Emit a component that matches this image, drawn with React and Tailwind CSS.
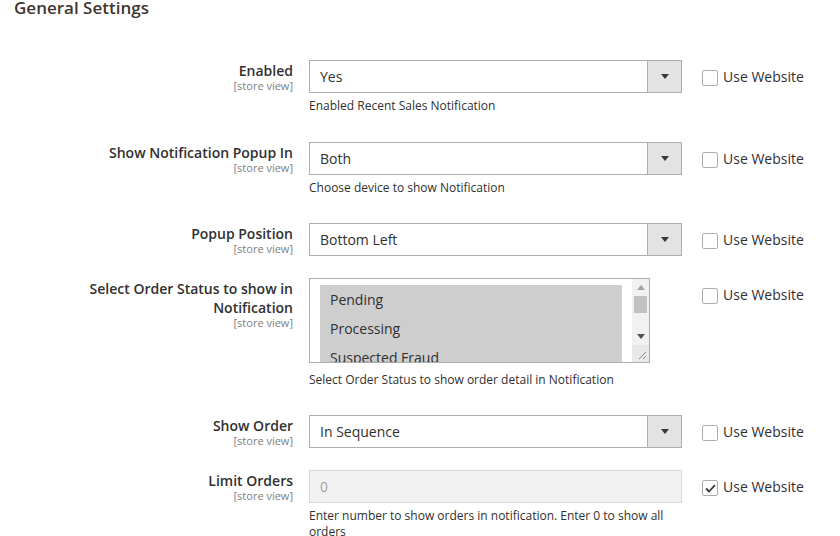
const Arrow = ({ className }) => (
  <svg width="8" height="5" viewBox="0 0 8 5" className={className}>
    <polygon points="0,0 8,0 4,5" fill="currentColor" />
  </svg>
);

const Label = ({ title }) => (
  <div className="ml-[80px] w-[213px] shrink-0 pt-[1px] text-right">
    <div className="text-[14px] font-semibold leading-[19px] text-[#303030]">{title}</div>
    <div className="text-[11px] leading-[12px] text-[#808080]">[store view]</div>
  </div>
);

const UseWebsite = ({ checked }) => (
  <label className="ml-[20px] flex items-start pt-[7px]">
    <span className="mt-[3px] flex h-[16px] w-[16px] items-center justify-center rounded-[2px] border border-[#adadad] bg-white">
      {checked && (
        <svg width="11" height="9" viewBox="0 0 11 9">
          <path d="M1 4.5 L4 7.5 L10 1.2" fill="none" stroke="#41362f" strokeWidth="1.8" />
        </svg>
      )}
    </span>
    <span className="ml-[5px] text-[14px] leading-[19px] text-[#303030]">Use Website</span>
  </label>
);

const Note = ({ children, className = 'mt-[5px]' }) => (
  <p className={`${className} text-[12px] leading-[16px] text-[#303030]`}>{children}</p>
);

const Select = ({ value }) => (
  <div className="flex h-[33px] w-[373px] border border-[#adadad] bg-white">
    <div className="flex flex-1 items-center pl-[10px] text-[14px] leading-[19px] text-[#303030]">{value}</div>
    <div className="flex w-[34px] items-center justify-center border-l border-[#adadad] bg-[#e3e3e3] text-[#41362f]">
      <Arrow />
    </div>
  </div>
);

const Row = ({ title, checked, className, children }) => (
  <div className={`flex items-start ${className}`}>
    <Label title={title} />
    <div className="ml-[16px] w-[373px] shrink-0">{children}</div>
    <UseWebsite checked={checked} />
  </div>
);

const statuses = ['Pending', 'Processing', 'Suspected Fraud', 'Complete'];

const MultiSelect = () => (
  <div className="flex h-[85px] w-[341px] border border-[#adadad] bg-white">
    <div className="flex-1 overflow-hidden px-[10px] pt-[6px]">
      <div className="bg-[#cecece]">
        {statuses.map((s) => (
          <div key={s} className="flex h-[29px] items-center pl-[10px] text-[14px] text-[#303030]">
            {s}
          </div>
        ))}
      </div>
    </div>
    {/* scrollbar */}
    <div className="flex w-[17px] flex-col bg-[#f1f1f1]">
      <div className="flex h-[17px] items-center justify-center text-[#a3a3a3]">
        <Arrow className="rotate-180" />
      </div>
      <div className="mx-[2px] h-[17px] bg-[#c1c1c1]" />
      <div className="flex-1" />
      <div className="flex h-[17px] items-center justify-center text-[#505050]">
        <Arrow />
      </div>
      <div className="flex h-[17px] items-end justify-end bg-[#e8e8e8] p-[2px]">
        <svg width="9" height="9" viewBox="0 0 9 9">
          <path d="M1 8 L8 1 M5 8 L8 5" stroke="#8a8a8a" strokeWidth="1" />
        </svg>
      </div>
    </div>
  </div>
);

export default function App() {
  return (
    <div className="min-h-screen bg-white font-['Open_Sans',sans-serif] text-[#303030]">
      <div className="flex flex-col">
        <h2 className="pl-[14px] pt-[1px] text-[17px] font-semibold leading-[14px] text-[#41362f]">General Settings</h2>

        <Row title="Enabled" className="mt-[45px]">
          <Select value="Yes" />
          <Note>Enabled Recent Sales Notification</Note>
        </Row>

        <Row title="Show Notification Popup In" className="mt-[28px]">
          <Select value="Both" />
          <Note>Choose device to show Notification</Note>
        </Row>

        <Row title="Popup Position" className="mt-[27px]">
          <Select value="Bottom Left" />
        </Row>

        <Row title="Select Order Status to show in Notification" className="mt-[22px]">
          <MultiSelect />
          <Note className="mt-[9px]">Select Order Status to show order detail in Notification</Note>
        </Row>

        <Row title="Show Order" className="mt-[27px]">
          <Select value="In Sequence" />
        </Row>

        <Row title="Limit Orders" checked className="mt-[22px]">
          <div className="flex h-[33px] w-[373px] items-center border border-[#d9d9d9] bg-[#f2f2f2] pl-[10px] text-[14px] text-[#a3a3a3]">
            0
          </div>
          <Note>Enter number to show orders in notification. Enter 0 to show all orders</Note>
        </Row>
      </div>
    </div>
  );
}
